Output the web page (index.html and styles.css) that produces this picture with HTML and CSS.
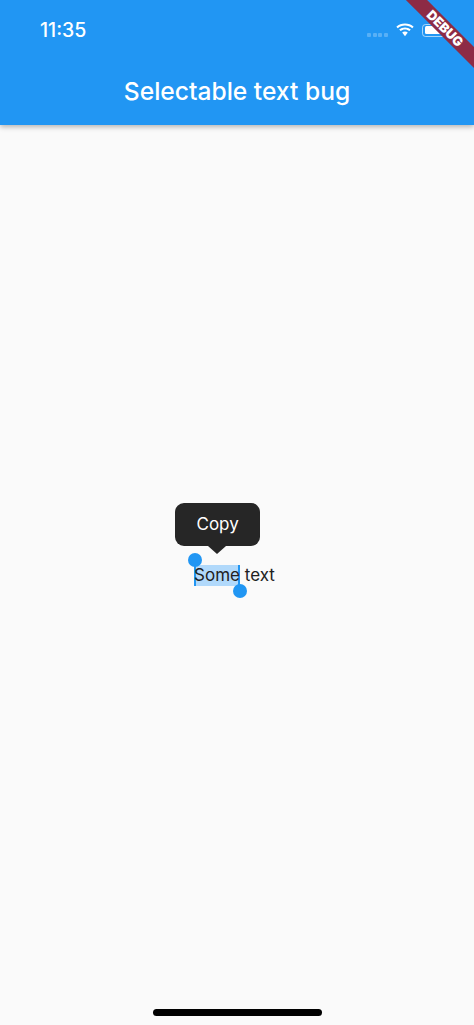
FILE: index.html
```html
<!DOCTYPE html>
<html lang="en">
<head>
  <meta charset="UTF-8" />
  <meta name="viewport" content="width=device-width, initial-scale=1.0" />
  <title>Selectable text bug</title>
  <link rel="stylesheet" href="styles.css">
</head>
<body>
  <header class="app-bar">
    <div class="status-bar">
      <span class="time">11:35</span>
      <div class="status-icons">
        <div class="signal">
          <i></i><i></i><i></i><i></i>
        </div>
        <svg class="wifi" viewBox="0 0 18 14" width="20" height="14" preserveAspectRatio="none">
          <path fill="#fff" d="M9 2.6c2.5 0 4.8 1 6.5 2.6l1.3-1.4C14.7 1.8 12 .6 9 .6S3.3 1.8 1.2 3.8l1.3 1.4C4.2 3.600 6.500 2.600 9 2.600z"/>
          <path fill="#fff" d="M9 6.400c1.500 0 2.900.6 3.900 1.500l1.300-1.400C12.800 5.200 11 4.500 9 4.500s-3.800.7-5.200 2l1.300 1.400c1-.9 2.400-1.500 3.900-1.500z"/>
          <path fill="#fff" d="M9 8.400c-1 0-1.900.4-2.500 1L9 13.200l2.500-3.800c-.6-.6-1.500-1-2.500-1z"/>
        </svg>
        <div class="battery"><div class="battery-level"></div></div>
      </div>
    </div>
    <h1 class="title">Selectable text bug</h1>
  </header>

  <main class="content">
    <div class="selectable">
      <div class="toolbar">
        Copy
        <span class="toolbar-arrow"></span>
      </div>
      <span class="handle handle-start"></span>
      <span class="selected">Some</span> text
      <span class="handle handle-end"></span>
    </div>
  </main>

  <div class="debug-corner">
    <div class="debug-ribbon">DEBUG</div>
  </div>
  <div class="home-indicator"></div>
</body>
</html>
```

FILE: styles.css
```css
html, body {
  height: 100%;
}
body {
  margin: 0;
  height: 1025px;
  overflow: hidden;
  display: flex;
  flex-direction: column;
  position: relative;
  font-family: Inter, 'Liberation Sans', sans-serif;
  background: #fafafa;
  color: #212121;
}
.app-bar {
  height: 125px;
  flex-shrink: 0;
  background-color: #2196f3;
  color: white;
  box-shadow: 0 2px 5px rgba(0,0,0,0.28);
  display: flex;
  flex-direction: column;
  position: relative;
  z-index: 1;
}
.status-bar {
  height: 60px;
  display: flex;
  justify-content: space-between;
  align-items: center;
  padding: 0 0 0 40px;
}
.time {
  font-size: 19.500px;
  font-weight: 500;
}
.status-icons {
  display: flex;
  align-items: center;
}
.signal {
  display: flex;
  gap: 1.600px;
  margin-right: 7px;
  margin-top: 10px;
}
.signal i {
  width: 4px;
  height: 4px;
  border-radius: 1px;
  background: rgba(255,255,255,0.25);
}
.wifi {
  margin-right: 7px;
}
.battery {
  width: 26px;
  height: 13px;
  padding: 1.500px;
  box-sizing: border-box;
  border: 1px solid rgba(255,255,255,0.6);
  border-radius: 3.500px;
  margin-right: 26px;
}
.battery-level {
  height: 100%;
  background: white;
  border-radius: 1.500px;
}
.title {
  margin: 0;
  padding-top: 17px;
  text-align: center;
  font-size: 24.600px;
  font-weight: 500;
  line-height: 29px;
}
.content {
  flex: 1;
  display: flex;
  align-items: center;
  justify-content: center;
  padding-right: 5px;
}
.selectable {
  position: relative;
  font-size: 17px;
  line-height: 21px;
}
.selected {
  display: inline-block;
  background: #b1d9fb;
  box-shadow: inset 2px 0 0 #2196f3, inset -2px 0 0 #2196f3;
}
.toolbar {
  position: absolute;
  left: -19px;
  top: -62px;
  width: 85px;
  height: 43px;
  display: flex;
  align-items: center;
  justify-content: center;
  background: #262626;
  border-radius: 9px;
  color: white;
  font-size: 17px;
}
.toolbar-arrow {
  position: absolute;
  left: 33px;
  bottom: -8px;
  border-left: 9px solid transparent;
  border-right: 9px solid transparent;
  border-top: 8px solid #262626;
}
.handle {
  position: absolute;
  width: 14px;
  height: 14px;
  border-radius: 50%;
  background: #2196f3;
}
.handle-start {
  left: -6px;
  top: -12px;
}
.handle-end {
  left: 39px;
  top: 19px;
}
.debug-corner {
  position: absolute;
  top: 0;
  right: 0;
  width: 100px;
  height: 100px;
  overflow: hidden;
  z-index: 2;
}
.debug-ribbon {
  position: absolute;
  top: 21px;
  right: -31px;
  width: 120px;
  height: 15px;
  line-height: 15px;
  transform: rotate(45deg);
  background: #8d2b45;
  color: white;
  font-size: 13px;
  font-weight: 900;
  text-align: center;
}
.home-indicator {
  position: absolute;
  left: 153px;
  bottom: 9px;
  width: 169px;
  height: 7px;
  border-radius: 3.500px;
  background: black;
}
```
